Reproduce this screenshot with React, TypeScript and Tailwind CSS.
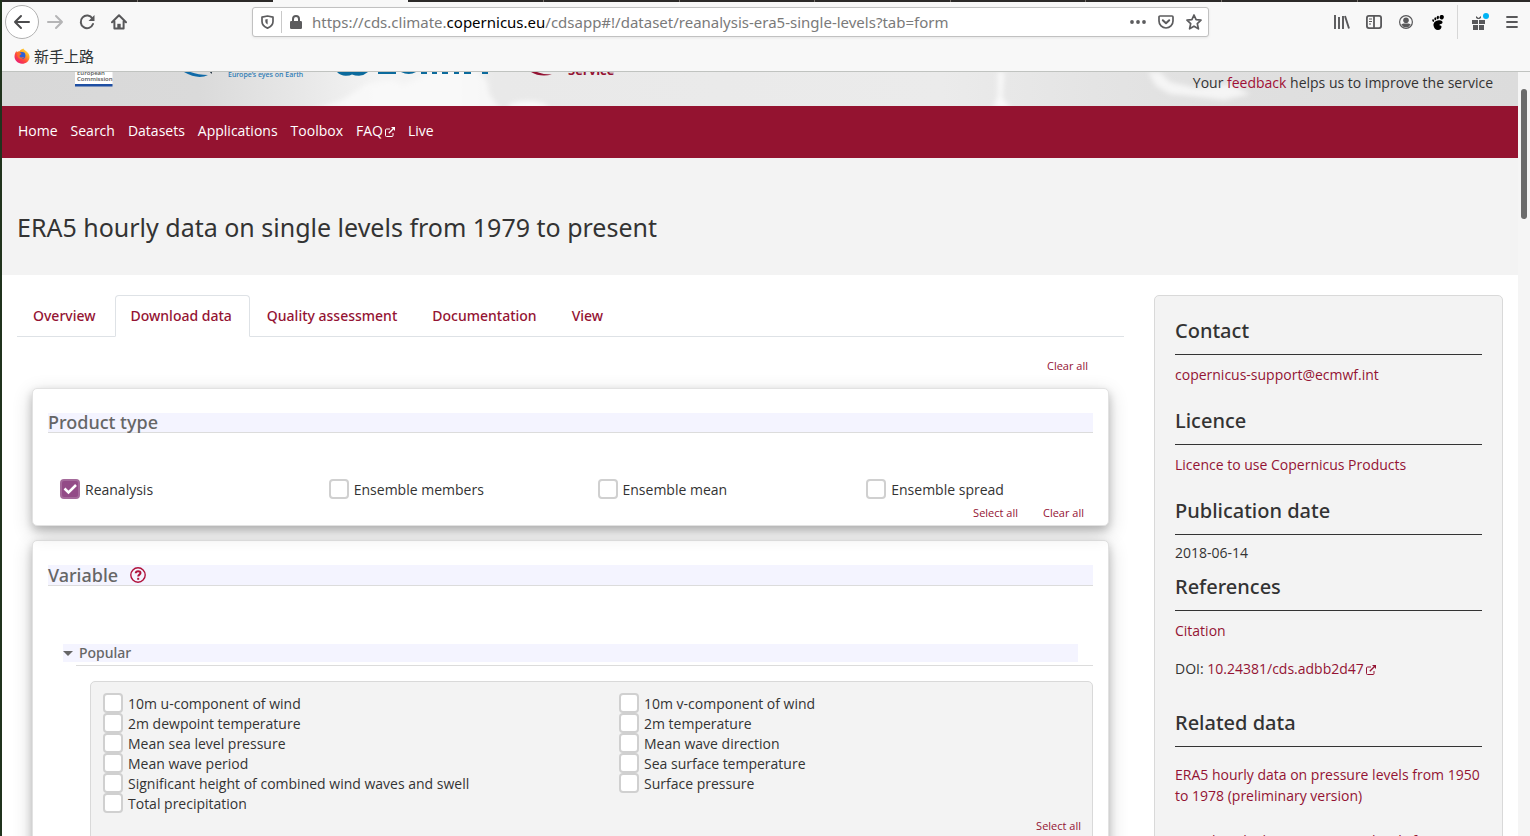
import { useState } from 'react';
import type { ReactNode } from 'react';

const NAV_LINKS = ['Home', 'Search', 'Datasets', 'Applications', 'Toolbox', 'FAQ', 'Live'];
const TABS = ['Overview', 'Download data', 'Quality assessment', 'Documentation', 'View'];
const PRODUCT_TYPES = ['Reanalysis', 'Ensemble members', 'Ensemble mean', 'Ensemble spread'];
const POPULAR = [
    '10m u-component of wind', '10m v-component of wind',
    '2m dewpoint temperature', '2m temperature',
    'Mean sea level pressure', 'Mean wave direction',
    'Mean wave period', 'Sea surface temperature',
    'Significant height of combined wind waves and swell', 'Surface pressure',
    'Total precipitation',
];

const ExternalIcon = () => (
    <svg viewBox="0 0 10 10" className="inline-block w-[10px] h-[10px] ml-[2px]" fill="none" stroke="currentColor">
        <path d="M5 2H1.5a1 1 0 0 0-1 1v5.5a1 1 0 0 0 1 1h5.5a1 1 0 0 0 1-1V6" />
        <path d="M3.8 6.2L8 2" strokeWidth="1.3" />
        <path d="M6 0h4v4z" fill="currentColor" stroke="none" />
    </svg>
);

const ToolButton = ({ label, children, className = '' }: { label: string; children: ReactNode; className?: string }) => (
    <button aria-label={label} className={`flex items-center justify-center w-8 h-8 text-[#58585a] ${className}`}>{children}</button>
);

/* Barra de herramientas del navegador */
const BrowserBar = () => (
    <div className="bg-[#f8f8f8] border-b border-[#c0c3c0] shrink-0">
        {/* Borde inferior de las pestañas */}
        <div className="h-[2px] bg-[#2c2a29] flex">
            <div className="w-[136px] border-r border-[#77716c]" />
            <div className="w-[135px]" />
            <div className="w-[135px] bg-[#f8f8f8]" />
            <div className="w-[136px] border-r border-[#77716c]" />
            <div className="w-[136px] border-r border-[#77716c]" />
            <div className="w-[135px] border-r border-[#77716c]" />
            <div className="w-[136px] border-r border-[#77716c]" />
            <div className="w-[135px] border-r border-[#77716c]" />
            <div className="w-[136px] border-r border-[#77716c]" />
            <div className="w-[136px] border-r border-[#77716c]" />
        </div>
        <div className="flex items-center h-10 pl-[3px]">
            <button aria-label="Back" className="w-[34px] h-[34px] rounded-full bg-white border border-[#b1b1b1] flex items-center justify-center text-[#4b4b4d]">
                <svg width="18" height="16" viewBox="0 0 18 16" fill="none" stroke="currentColor" strokeWidth="2" strokeLinecap="round" strokeLinejoin="round"><path d="M16 8H2M8 2L2 8l6 6" /></svg>
            </button>
            <ToolButton label="Forward">
                <svg width="18" height="16" viewBox="0 0 18 16" fill="none" stroke="#b5b5b6" strokeWidth="2" strokeLinecap="round" strokeLinejoin="round"><path d="M2 8h14M10 2l6 6-6 6" /></svg>
            </ToolButton>
            <ToolButton label="Reload">
                <svg width="16" height="16" viewBox="0 0 16 16" fill="none" stroke="currentColor" strokeWidth="2"><path d="M13.4 4.5A6.3 6.3 0 1 0 14 10" strokeLinecap="round" /><path d="M15.5 1v6h-6z" fill="currentColor" stroke="none" /></svg>
            </ToolButton>
            <ToolButton label="Home">
                <svg width="16" height="16" viewBox="0 0 16 16" fill="none" stroke="currentColor" strokeWidth="2" strokeLinecap="round" strokeLinejoin="round"><path d="M1 8.2L8 1.3l7 6.9M3.4 7.5v7h9.2v-7" /><path d="M6.3 14.5V9.8h3.4v4.7z" fill="currentColor" stroke="none" /></svg>
            </ToolButton>
            <div className="flex items-center h-[30px] w-[957px] min-w-0 ml-[117px] bg-white border border-[#c1c1c1] rounded-[3px] shadow-[0_1px_3px_rgba(0,0,0,0.08)] text-[#5c5c5e]">
                <svg className="ml-2 shrink-0" width="13" height="14" viewBox="0 0 13 14" fill="none" stroke="currentColor" strokeWidth="1.7"><path d="M6.5 1L12 2.2v4.3c0 3-2 5.2-5.5 6.6C3 11.7 1 9.5 1 6.5V2.2z" strokeLinejoin="round" /><path d="M6.6 4v5.6C5 8.7 4.3 7.5 4.3 6V4.4z" fill="currentColor" stroke="none" /></svg>
                <span className="w-px h-[22px] bg-[#c9c9c9] ml-[7px] shrink-0" />
                <svg className="ml-2 shrink-0" width="12" height="14" viewBox="0 0 12 14"><path d="M3 6.5V4a3 3 0 0 1 6 0v2.5" fill="none" stroke="currentColor" strokeWidth="2" /><rect y="6" width="12" height="8" rx="1.3" fill="currentColor" /></svg>
                <p className="ml-[10px] flex-1 min-w-0 truncate text-[15px] leading-5 text-[#7a7a7a] font-['Noto_Sans',sans-serif]">
                    https://cds.climate.<span className="text-black">copernicus.eu</span>/cdsapp#!/dataset/reanalysis-era5-single-levels?tab=form
                </p>
                <button aria-label="Page actions" className="w-7 flex justify-center">
                    <svg width="16" height="4" viewBox="0 0 16 4" fill="currentColor"><circle cx="2" cy="2" r="1.9" /><circle cx="8" cy="2" r="1.9" /><circle cx="14" cy="2" r="1.9" /></svg>
                </button>
                <button aria-label="Save to Pocket" className="w-7 flex justify-center">
                    <svg width="16" height="14" viewBox="0 0 16 14" fill="none" stroke="currentColor" strokeWidth="2" strokeLinecap="round" strokeLinejoin="round"><path d="M2 1h12a1 1 0 0 1 1 1v4a7 7 0 0 1-14 0V2a1 1 0 0 1 1-1z" strokeWidth="1.7" /><path d="M4.8 5.2L8 8.3l3.2-3.1" /></svg>
                </button>
                <button aria-label="Bookmark" className="w-7 flex justify-center">
                    <svg width="16" height="16" viewBox="0 0 16 16" fill="none" stroke="currentColor" strokeWidth="1.7" strokeLinejoin="round"><path d="M8 1l2.1 4.7 4.9.5-3.7 3.4 1.1 5.2L8 12.2l-4.4 2.6 1.1-5.2L1 6.2l4.9-.5z" /></svg>
                </button>
            </div>
            <div className="flex items-center ml-auto pr-[2px]">
                <ToolButton label="Library">
                    <svg width="16" height="14" viewBox="0 0 16 14" fill="none" stroke="currentColor" strokeWidth="1.9"><path d="M1 0v14M5 2v12M9 1v13M11 1l4 12.5" /></svg>
                </ToolButton>
                <ToolButton label="Sidebars">
                    <svg width="16" height="14" viewBox="0 0 16 14" fill="none" stroke="currentColor" strokeWidth="1.8"><rect x=".9" y=".9" width="14.2" height="12.2" rx="2" /><path d="M8 1v12" /><path d="M3 4h3M3 6.5h3M3 9h2" strokeWidth="1" /></svg>
                </ToolButton>
                <ToolButton label="Account">
                    <svg width="14" height="14" viewBox="0 0 14 14"><circle cx="7" cy="7" r="6.4" fill="none" stroke="currentColor" strokeWidth="1.2" /><circle cx="7" cy="5.3" r="2.8" fill="currentColor" /><path d="M2.3 9.5C4 8.3 5 8.6 7 8.6s3-.3 4.7.9A5.3 5.3 0 0 1 7 12.2a5.3 5.3 0 0 1-4.7-2.7z" fill="currentColor" /></svg>
                </ToolButton>
                <ToolButton label="GNOME Shell integration">
                    <svg width="12" height="15" viewBox="0 0 12 15" fill="#000"><ellipse cx="9.7" cy="2.2" rx="2.1" ry="2.3" transform="rotate(20 9.7 2.2)" /><ellipse cx="5.8" cy="2.5" rx="1.1" ry="1.7" transform="rotate(10 5.8 2.5)" /><ellipse cx="3.3" cy="3.8" rx="1" ry="1.5" /><ellipse cx="1.2" cy="5.6" rx=".9" ry="1.3" transform="rotate(-15 1.2 5.6)" /><path d="M6.8 5.2c2.900-.2 4.400 1.300 3.600 2.900-.6 1.200-3 1.100-3.100 1.900 0 .6 2 .3 2.200 1.500.2 1.900-1.400 3.500-3.500 3.500-2.500 0-4.100-2-4.500-4.500C1.200 7.500 3.800 5.400 6.800 5.200z" /></svg>
                </ToolButton>
                <span className="w-px h-[34px] bg-[#d7d7d7] ml-[3px] mr-[6px]" />
                <ToolButton label="What's new">
                    <svg width="18" height="18" viewBox="0 0 18 18" fill="currentColor"><path d="M1 7h6v4H1zM8 7h6v4H8zM2 12h5v5H2zM8 12h5v5H8z" /><path d="M5 3l2.500 2L10 3v2L8.500 6h-2L5 5z" /><circle cx="15" cy="3" r="3" fill="#00b3f4" /></svg>
                </ToolButton>
                <ToolButton label="Menu">
                    <svg width="12" height="12" viewBox="0 0 12 12" stroke="currentColor" strokeWidth="1.8" strokeLinecap="round"><path d="M1 1h10M1 6h10M1 11h10" /></svg>
                </ToolButton>
            </div>
        </div>
        <div className="flex items-center h-[29px] pl-3 pb-[2px] gap-1">
            <svg width="16" height="16" viewBox="0 0 16 16">
                <defs>
                    <linearGradient id="fox" x1="1" y1="0" x2="0.2" y2="1"><stop offset="0" stopColor="#fff36b" /><stop offset=".35" stopColor="#ffae24" /><stop offset=".65" stopColor="#ff4a3c" /><stop offset="1" stopColor="#e6197a" /></linearGradient>
                </defs>
                <path d="M9.5.5c.6 1.500 2 2 3 3 2 1.600 3 3.300 3 5.400C15.500 13 12 15.700 8 15.700S.5 12.700.5 8.600C.5 6 1.500 4.200 2.500 3l.4 1.200C3.500 3.500 4.500 3 5.500 3.200 6.500 2 8 .8 9.500.5z" fill="url(#fox)" />
                <circle cx="8" cy="7.5" r="3.4" fill="#2b5fd9" />
                <path d="M3.500 4.500c1.500-.4 3.500.2 4.100 1.500l-1.500 1c-1 .8-.4 2.300 1 2.500 1.300.1 2-.4 3-.4-1 2-4 2.500-5.600.8-1.300-1.400-1.900-3.900-1-5.400z" fill="#ff6a2a" />
            </svg>
            <a href="#start" className="text-[15px] leading-6 text-[#2e3436] font-['Noto_Sans_CJK_SC',sans-serif]">新手上路</a>
        </div>
    </div>
);

/* Logos de los socios sobre fondo de nubes, recortados por el scroll */
const HeaderStrip = () => (
    <header className="relative flex justify-end h-[34px] overflow-hidden bg-[#dfdfdf]">
        <svg className="absolute inset-0 w-full h-full" viewBox="0 0 1516 34" preserveAspectRatio="xMinYMin slice">
            <defs>
                <linearGradient id="sky" x1="0" x2="1">
                    <stop offset="0" stopColor="#d8d8d8" /><stop offset=".13" stopColor="#dadada" /><stop offset=".19" stopColor="#e6e6e6" />
                    <stop offset=".25" stopColor="#f4f4f4" /><stop offset=".3" stopColor="#f4f4f4" /><stop offset=".325" stopColor="#e9e9e9" /><stop offset=".62" stopColor="#ebebeb" />
                    <stop offset=".72" stopColor="#e4e4e4" /><stop offset=".8" stopColor="#e0e0e0" /><stop offset="1" stopColor="#dcdcdc" />
                </linearGradient>
                <filter id="puff" x="-20%" y="-50%" width="140%" height="200%"><feGaussianBlur stdDeviation="2.5" /></filter>
            </defs>
            <rect width="1516" height="34" fill="url(#sky)" />
            <g fill="#fafafa" filter="url(#puff)">
                <path d="M310 38l30-10 25-16 25-4 12 5 18-8 15-7h40l10 12 2 12 12 16z" opacity=".8" />
                <ellipse cx="526" cy="36" rx="20" ry="7" />
                <path d="M996 0h6l-2 26 9 10h-18l5-12z" />
                <path d="M1146 0h12l10 10 26 6 34-4 20 10-26 6-34-4-20-2-14-8z" opacity=".8" />
            </g>
            <rect x="73" y="-30" width="37.5" height="42" fill="#fff" />
            <g fontFamily="Open Sans, sans-serif" fontSize="6" fontWeight="600" fill="#555">
                <text x="75" y="3">European</text>
                <text x="75" y="9">Commission</text>
            </g>
            <rect x="73" y="12" width="37.5" height="2.5" fill="#1e4fa3" />
            <path d="M182 0q14 8 24 3q-11 0-20-4z" fill="#0f6aa8" />
            <path d="M208 0l1.5 2 .5-2z" fill="#123" />
            <text x="226" y="5" fontFamily="Noto Sans, sans-serif" fontSize="7" fontWeight="500" fill="#2878b4">Europe’s eyes on Earth</text>
            <path d="M335 0q4 4 9 3.800 4 0 6-1.300 3 1.300 7 1.300 5-.3 9-3.800z" fill="#0b6a9c" />
            <path d="M376 0h18v2h-18zM399 0h15q-7 4-15 0zM419 0h6v2h-6zM430 0h5v2h-5zM440 0h6v2h-6zM452 0h5v2h-5zM462 0h7v2h-7zM480 0h6v2h-6z" fill="#0b6a9c" />
            <path d="M529 0q9 5.500 21 2.500q-9 0-15-2.500z" fill="#941333" />
            <text x="566" y="3" fontFamily="Open Sans, sans-serif" fontSize="13" fontWeight="700" fill="#941333">Service</text>
        </svg>
        <p className="relative pr-[25px] text-sm leading-[22px]">
            Your <a href="#feedback" className="text-[#a00f35]">feedback</a> helps us to improve the service
        </p>
    </header>
);

const Check = ({ label, defaultChecked = false }: { label: string; defaultChecked?: boolean }) => (
    <label className="flex items-center h-5 gap-[5px] whitespace-nowrap">
        <span className="relative w-5 h-5 shrink-0">
            <input
                type="checkbox"
                defaultChecked={defaultChecked}
                className="peer appearance-none block w-5 h-5 rounded-[4px] border-2 border-[#d0d0d0] bg-white checked:bg-[#934b87] checked:border-[#a56a9b]"
            />
            <svg viewBox="0 0 20 20" className="absolute inset-0 hidden peer-checked:block pointer-events-none" fill="none" stroke="#fff" strokeWidth="2.5">
                <path d="M4.5 9.5l4 4 7.500-7.500" />
            </svg>
        </span>
        <span className="pt-px">{label}</span>
    </label>
);

const SmallAction = ({ children }: { children: string }) => (
    <button className="text-[11px] leading-4 text-[#941333]">{children}</button>
);

const headingFont = "font-['Noto_Sans',sans-serif] font-medium";

const Card = ({ title, help = false, className = '', children }: { title: string; help?: boolean; className?: string; children: ReactNode }) => (
    <section className={`bg-white border border-[#e2e2e2] rounded-[5px] mx-[15px] shadow-[0_4px_8px_rgba(0,0,0,0.2),0_6px_20px_rgba(0,0,0,0.19)] ${className}`}>
        <h4 className={`flex mt-6 mx-[15px] bg-[#f4f4ff] border-b border-[#dcdcdc] text-lg text-[#666] ${help ? 'items-center h-[21px] leading-5' : 'h-5 leading-[18px]'} ${headingFont}`}>
            {title}
            {help && (
                <button aria-label="Help" className="ml-3">
                    <svg width="16" height="16" viewBox="0 0 16 16" fill="none" stroke="#b0123c">
                        <circle cx="8" cy="8" r="7.2" strokeWidth="1.4" />
                        <path d="M5.7 6.3c.2-3 4.900-2.700 4.800-.2 0 1.600-2.300 1.500-2.300 3.500" strokeWidth="2" />
                        <path d="M7.2 10.8h2v2h-2z" fill="#b0123c" stroke="none" />
                    </svg>
                </button>
            )}
        </h4>
        {children}
    </section>
);

const SideBlock = ({ title, children, className = '' }: { title: string; children: ReactNode; className?: string }) => (
    <section className={className}>
        <h3 className={`text-xl leading-6 pb-[11px] border-b border-[#333] ${headingFont}`}>{title}</h3>
        {children}
    </section>
);

const link = 'text-[#941333] hover:underline';

export default function App() {
    const [tab, setTab] = useState('Download data');

    return (
        <div className="h-screen flex flex-col overflow-hidden bg-white border-l-2 border-[#20331d] text-[#333] text-sm leading-5 font-['Open_Sans',sans-serif]">
            <BrowserBar />
            <div className="flex flex-1 min-h-0">
                <div className="flex-1 min-w-0 overflow-hidden">
                    <HeaderStrip />
                    <nav className="flex items-center gap-[13px] h-[52px] pl-4 pb-[2px] bg-[#941330] text-white">
                        {NAV_LINKS.map((n) => (
                            <a key={n} href={`#${n}`} className="whitespace-nowrap">{n}{n === 'FAQ' && <ExternalIcon />}</a>
                        ))}
                    </nav>
                    <div className="h-[117px] px-[15px] pt-[52px] bg-[#f3f3f3]">
                        <h1 className="text-[25px] leading-[34px] font-['Noto_Sans',sans-serif]">ERA5 hourly data on single levels from 1979 to present</h1>
                    </div>

                    <div className="flex pt-5">
                        <main className="w-3/4 px-[15px]">
                            <div role="tablist" className="flex gap-px border-b border-[#dee2e6]">
                                {TABS.map((t) => (
                                    <button
                                        key={t}
                                        role="tab"
                                        aria-selected={t === tab}
                                        onClick={() => setTab(t)}
                                        className={`h-[42px] -mb-px pl-[15px] pr-[17px] pb-px text-[#941333] border rounded-t ${headingFont} ${t === tab ? 'bg-white border-[#dee2e6] border-b-white' : 'border-transparent'}`}
                                    >
                                        {t}
                                    </button>
                                ))}
                            </div>
                            <div className="flex justify-end pt-[21px] pr-9 pb-[14px]">
                                <SmallAction>Clear all</SmallAction>
                            </div>

                            <Card title="Product type" className="relative z-10">
                                <div className="grid grid-cols-4 mt-[46px]">
                                    {PRODUCT_TYPES.map((p) => (
                                        <div key={p} className="pl-[27px]"><Check label={p} defaultChecked={p === 'Reanalysis'} /></div>
                                    ))}
                                </div>
                                <div className="flex justify-end gap-[25px] pt-[6px] pr-6 pb-1">
                                    <SmallAction>Select all</SmallAction>
                                    <SmallAction>Clear all</SmallAction>
                                </div>
                            </Card>

                            <Card title="Variable" help className="mt-[14px]">
                                <div className="mt-[58px] ml-[30px] mr-[30px] bg-[#f4f4ff]">
                                    <button aria-expanded="true" className={`flex items-center h-[18px] text-[#666] ${headingFont}`}>
                                        <span className="border-x-5 border-x-transparent border-t-5 border-t-[#666] mr-[6px]" />
                                        Popular
                                    </button>
                                </div>
                                <div className="mt-[3px] ml-[43px] mr-[15px] border-t border-[#dcdcdc]" />
                                <div className="mt-[15px] ml-[57px] mr-[15px] mb-6 pt-[11px] pl-3 pr-[11px] pb-4 rounded-[5px] border border-[#d9d9d9] bg-[#f3f3f3]">
                                    <div className="grid grid-cols-[516px_1fr]">
                                        {POPULAR.map((v) => <Check key={v} label={v} />)}
                                    </div>
                                    <div className="flex justify-end pt-[5px]">
                                        <SmallAction>Select all</SmallAction>
                                    </div>
                                </div>
                            </Card>
                        </main>

                        <aside className="w-1/4 px-[15px]">
                            <div className="bg-[#f3f3f3] border border-[#d9d9d9] rounded-[5px] px-5 pt-[23px] pb-5">
                                <SideBlock title="Contact">
                                    <p className="pt-[10px]"><a href="mailto:copernicus-support@ecmwf.int" className={link}>copernicus-support@ecmwf.int</a></p>
                                </SideBlock>
                                <SideBlock title="Licence" className="mt-6">
                                    <p className="pt-[10px]"><a href="#licence" className={link}>Licence to use Copernicus Products</a></p>
                                </SideBlock>
                                <SideBlock title="Publication date" className="mt-6">
                                    <p className="pt-2">2018-06-14</p>
                                </SideBlock>
                                <SideBlock title="References" className="mt-3">
                                    <p className="pt-[10px]"><a href="#citation" className={link}>Citation</a></p>
                                    <p className="pt-[18px]">DOI: <a href="#doi" className={link}>10.24381/cds.adbb2d47<ExternalIcon /></a></p>
                                </SideBlock>
                                <SideBlock title="Related data" className="mt-8">
                                    <p className="pt-[17px] leading-[21px]"><a href="#pressure-1950" className={link}>ERA5 hourly data on pressure levels from 1950 to 1978 (preliminary version)</a></p>
                                    <p className="pt-6 leading-[21px]"><a href="#pressure-1979" className={link}>ERA5 hourly data on pressure levels from 1979 to present</a></p>
                                </SideBlock>
                            </div>
                        </aside>
                    </div>
                </div>
                {/* Scrollbar */}
                <div className="w-3 shrink-0 bg-[#f5f5f5] pt-[17px] pl-[3px]">
                    <div className="w-[6px] h-[130px] rounded-full bg-[#6b6b6b]" />
                </div>
            </div>
        </div>
    );
}
